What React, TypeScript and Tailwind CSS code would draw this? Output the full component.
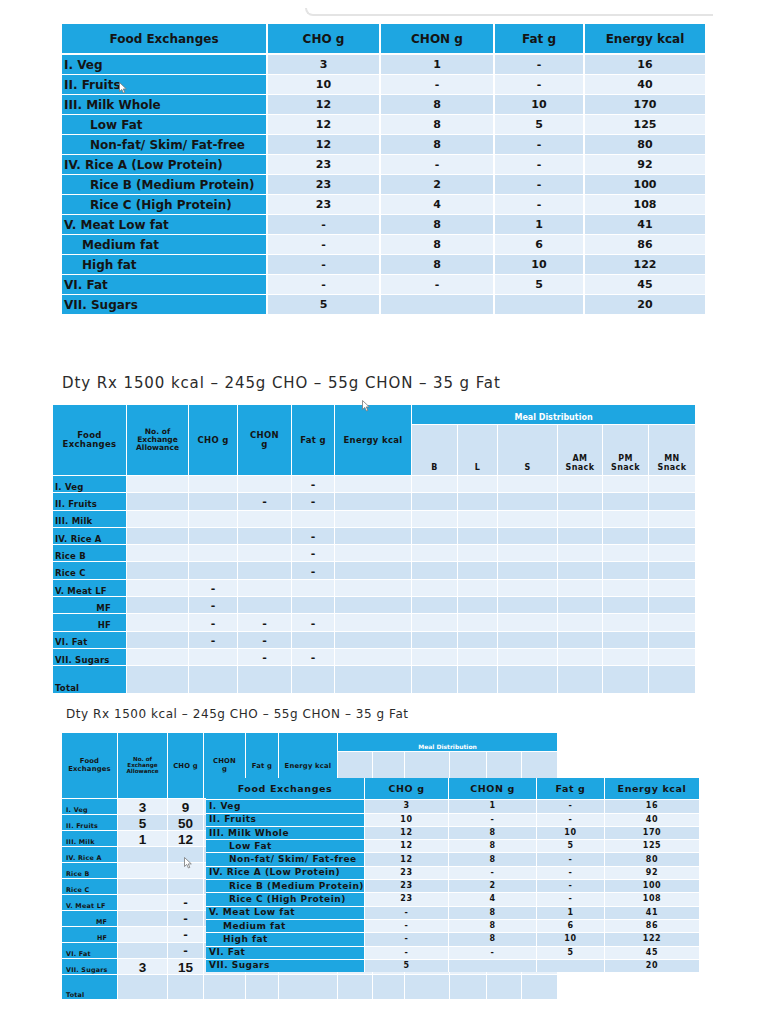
const CY = "bg-[#1ea6e1]";
const DK = "bg-[#cfe2f3]";
const LT = "bg-[#e8f1fa]";

type Row = { label: string; lvl: 0 | 1 | 2; v: string[] };

const exchanges: Row[] = [
  { label: "I. Veg", lvl: 0, v: ["3", "1", "-", "16"] },
  { label: "II. Fruits", lvl: 0, v: ["10", "-", "-", "40"] },
  { label: "III. Milk Whole", lvl: 0, v: ["12", "8", "10", "170"] },
  { label: "Low Fat", lvl: 2, v: ["12", "8", "5", "125"] },
  { label: "Non-fat/ Skim/ Fat-free", lvl: 2, v: ["12", "8", "-", "80"] },
  { label: "IV. Rice A (Low Protein)", lvl: 0, v: ["23", "-", "-", "92"] },
  { label: "Rice B (Medium Protein)", lvl: 2, v: ["23", "2", "-", "100"] },
  { label: "Rice C (High Protein)", lvl: 2, v: ["23", "4", "-", "108"] },
  { label: "V. Meat Low fat", lvl: 0, v: ["-", "8", "1", "41"] },
  { label: "Medium fat", lvl: 1, v: ["-", "8", "6", "86"] },
  { label: "High fat", lvl: 1, v: ["-", "8", "10", "122"] },
  { label: "VI. Fat", lvl: 0, v: ["-", "-", "5", "45"] },
  { label: "VII. Sugars", lvl: 0, v: ["5", "", "", "20"] },
];

const heads = ["Food Exchanges", "CHO g", "CHON g", "Fat g", "Energy kcal"];

function ExchangeTable({ size }: { size: "lg" | "sm" }) {
  const lg = size === "lg";
  const cols = lg
    ? "grid grid-cols-[204px_111px_112px_88px_120px] gap-x-[2px]"
    : "grid grid-cols-[158px_83px_87px_67px_94px] gap-x-px";
  const headCls = lg ? "h-[29px] mb-px text-[12px]" : "h-[21px] text-[9.5px] tracking-[0.6px]";
  const rowH = lg ? "h-[19px]" : "h-[12.3px]";
  const labelCls = lg ? "text-[12px]" : "text-[9px] tracking-[0.5px]";
  const dataCls = lg ? "text-[11px]" : "text-[8px] tracking-[0.6px]";
  const indent = lg ? ["pl-[2px]", "pl-[20px]", "pl-[28px]"] : ["pl-[3px]", "pl-[17px]", "pl-[23px]"];

  return (
    <div className="flex flex-col gap-y-px bg-white font-bold leading-none text-[#141414]">
      <div className={`${cols} ${headCls}`}>
        {heads.map((h) => (
          <div key={h} className={`${CY} flex items-center justify-center whitespace-nowrap`}>
            {h}
          </div>
        ))}
      </div>
      {exchanges.map((r, i) => (
        <div key={r.label} className={`${cols} ${rowH}`}>
          <div className={`${CY} flex items-center whitespace-nowrap ${indent[r.lvl]} ${labelCls}`}>
            {r.label}
          </div>
          {r.v.map((v, j) => (
            <div
              key={j}
              className={`${i % 2 === 0 ? DK : LT} flex items-center justify-center ${dataCls}`}
            >
              {v}
            </div>
          ))}
        </div>
      ))}
    </div>
  );
}

const planLabels = [
  "I. Veg",
  "II. Fruits",
  "III. Milk",
  "IV. Rice A",
  "Rice B",
  "Rice C",
  "V. Meat LF",
  "MF",
  "HF",
  "VI. Fat",
  "VII. Sugars",
  "Total",
];

const dashes2: Record<number, string>[] = [
  { 4: "-" },
  { 3: "-", 4: "-" },
  {},
  { 4: "-" },
  { 4: "-" },
  { 4: "-" },
  { 2: "-" },
  { 2: "-" },
  { 2: "-", 3: "-", 4: "-" },
  { 2: "-", 3: "-" },
  { 3: "-", 4: "-" },
  {},
];

const values3: Record<number, string>[] = [
  { 1: "3", 2: "9" },
  { 1: "5", 2: "50" },
  { 1: "1", 2: "12" },
  {},
  {},
  {},
  { 2: "-" },
  { 2: "-" },
  { 2: "-" },
  { 2: "-" },
  { 1: "3", 2: "15" },
  {},
];

const meals = ["B", "L", "S", "AM Snack", "PM Snack", "MN Snack"];

function PlanTable({ size }: { size: "lg" | "sm" }) {
  const lg = size === "lg";
  const grid = lg
    ? "grid grid-cols-[73px_61px_48px_53px_42px_76px_45px_39px_59px_44px_45px_46px] grid-rows-[19px_50px_repeat(11,16.3px)_27px]"
    : "grid grid-cols-[55px_49px_35px_41px_32px_58px_34px_31px_44px_36px_34px_35px] grid-rows-[18px_46px_repeat(11,15px)_24px]";
  const head = lg ? "text-[8.5px] tracking-[0.3px]" : "text-[6.8px] tracking-[0.2px]";
  const tiny = lg ? "text-[7.5px]" : "text-[5.6px]";
  const band = lg ? "text-[8px] pb-[2px]" : "text-[6px] pb-[1px]";
  const label = lg ? "text-[8.5px] tracking-[0.2px] pl-[2px] pb-[1px]" : "text-[6.4px] tracking-[0.2px] pl-[4px] pb-px";
  const right = lg ? "pr-[15px]" : "pr-[10px]";
  const cells = lg ? dashes2 : values3;

  return (
    <div className={`${grid} gap-px bg-white font-bold text-[#141414]`}>
      <div className={`${CY} row-span-2 flex items-center justify-center text-center leading-[1.1] ${head}`}>
        Food
        <br />
        Exchanges
      </div>
      <div className={`${CY} row-span-2 flex items-center justify-center text-center leading-[1.05] ${tiny}`}>
        No. of
        <br />
        Exchange
        <br />
        Allowance
      </div>
      <div className={`${CY} row-span-2 flex items-center justify-center text-center whitespace-nowrap ${head}`}>
        CHO g
      </div>
      <div className={`${CY} row-span-2 flex items-center justify-center text-center leading-[1.1] ${head}`}>
        CHON
        <br />g
      </div>
      <div className={`${CY} row-span-2 flex items-center justify-center text-center whitespace-nowrap ${head}`}>
        Fat g
      </div>
      <div className={`${CY} row-span-2 flex items-center justify-center text-center whitespace-nowrap ${head}`}>
        Energy kcal
      </div>
      <div className={`${CY} col-span-6 flex items-end justify-center text-white leading-none ${band}`}>
        Meal Distribution
      </div>
      {meals.map((m) => (
        <div
          key={m}
          className={`${DK} flex items-end justify-center pb-[3px] text-center text-[8px] leading-[1.05] tracking-[0.4px]`}
        >
          {lg &&
            (m.includes(" ") ? (
              <span>
                {m.split(" ")[0]}
                <br />
                {m.split(" ")[1]}
              </span>
            ) : (
              m
            ))}
        </div>
      ))}
      {planLabels.map((l, i) => (
        <RowCells key={l}>
          <div
            className={`${CY} flex items-end leading-none whitespace-nowrap ${label} ${
              l === "MF" || l === "HF" ? `justify-end ${right}` : ""
            }`}
          >
            {l}
          </div>
          {Array.from({ length: 11 }, (_, k) => k + 1).map((c) => {
            const v = cells[i][c];
            const dash = v === "-";
            return (
              <div
                key={c}
                className={`${i % 2 === 0 ? LT : DK} flex justify-center leading-none ${
                  lg
                    ? "items-center pt-[1px] text-[11px]"
                    : dash
                      ? "items-center text-[11px]"
                      : "items-center pt-px font-['Liberation_Sans',sans-serif] text-[13.5px]"
                }`}
              >
                {v ?? ""}
              </div>
            );
          })}
        </RowCells>
      ))}
    </div>
  );
}

function RowCells({ children }: { children: React.ReactNode }) {
  return <>{children}</>;
}

function Cursor({ className }: { className: string }) {
  return (
    <svg className={`absolute ${className}`} width="8" height="12" viewBox="0 0 8 12">
      <path
        d="M0.5 0.5 L0.5 9.5 L2.8 7.4 L4.4 11 L5.8 10.4 L4.3 6.9 L7.3 6.9 Z"
        fill="#fff"
        stroke="#777"
        strokeWidth="0.8"
      />
    </svg>
  );
}

export default function App() {
  return (
    <div className="relative h-[1024px] w-[768px] overflow-hidden bg-white font-['DejaVu_Sans',sans-serif]">
      <div className="h-[24px] pt-[8px]">
        <div className="ml-[305px] h-[8px] w-[408px] rounded-bl-[10px] border-b-2 border-l-2 border-[#e4e4e4]" />
      </div>

      <div className="ml-[62px] w-[643px]">
        <ExchangeTable size="lg" />
      </div>

      <p className="mt-[60px] ml-[62px] text-[15px] leading-[18px] tracking-[0.9px] whitespace-nowrap text-[#2b2b2b]">
        Dty Rx 1500 kcal – 245g CHO – 55g CHON – 35 g Fat
      </p>

      <div className="mt-[13px] ml-[53px] w-[642px]">
        <PlanTable size="lg" />
      </div>

      <p className="mt-[14px] ml-[66px] text-[12px] leading-[14px] tracking-[0.55px] whitespace-nowrap text-[#2b2b2b]">
        Dty Rx 1500 kcal – 245g CHO – 55g CHON – 35 g Fat
      </p>

      <div className="relative mt-[12px] ml-[62px] w-[495px]">
        <PlanTable size="sm" />
        <div className="absolute left-[144px] top-[45px] w-[493px]">
          <ExchangeTable size="sm" />
        </div>
      </div>

      <Cursor className="left-[119px] top-[82px]" />
      <Cursor className="left-[362px] top-[400px]" />
      <Cursor className="left-[184px] top-[857px]" />
    </div>
  );
}
